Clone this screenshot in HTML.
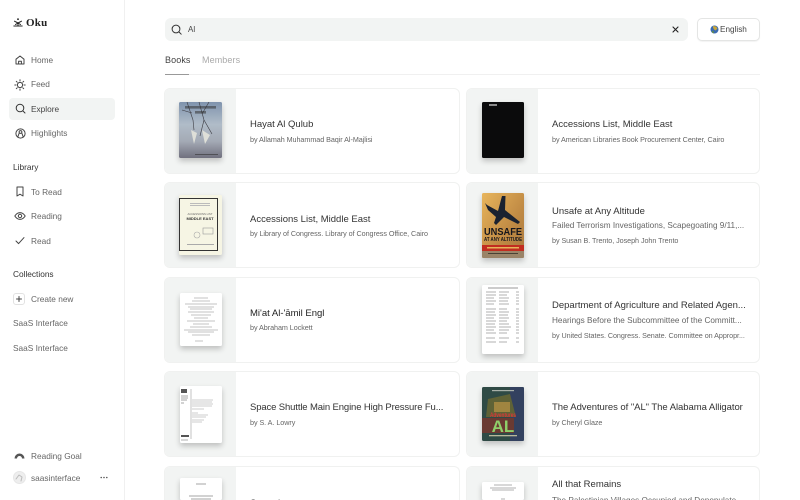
<!DOCTYPE html>
<html><head><meta charset="utf-8">
<style>
*{box-sizing:border-box;margin:0;padding:0}
html,body{width:800px;height:500px;overflow:hidden;background:#fff;font-family:"Liberation Sans",sans-serif;color:#333}
body{position:relative}
.a{position:absolute}
.t{position:absolute;white-space:nowrap;line-height:14px}
.nav{font-size:8.3px;color:#666}
.hd{font-size:8.3px;color:#333}
.card{position:absolute;height:86px;border:1px solid #f0f1f0;border-radius:6px;background:#fff;overflow:hidden}
.card .side{position:absolute;left:0;top:0;width:71px;height:100%;background:#f2f4f3}
.cov{position:absolute;width:43px;height:56px;border-radius:1.5px;box-shadow:0 3px 6px rgba(0,0,0,.22);overflow:hidden;background:#fff}
.cov svg{display:block}
.ti{position:absolute;left:85px;font-size:9.5px;color:#333;white-space:nowrap;line-height:14px}
.su{position:absolute;left:85px;font-size:8.2px;color:#666;white-space:nowrap;line-height:14px}
.by{position:absolute;left:85px;font-size:7.2px;color:#666;white-space:nowrap;letter-spacing:-.05px;line-height:12px}
svg.i{position:absolute;fill:none;stroke:#444;stroke-width:1;stroke-linecap:round;stroke-linejoin:round}
</style></head><body>

<div class="a" style="left:124px;top:0;width:1px;height:500px;background:#f0f0f0"></div>

<!-- logo -->
<svg class="i" style="left:13px;top:18px;stroke:#222" width="10" height="9" viewBox="0 0 10 9"><circle cx="5" cy="1.200" r=".9" fill="#222" stroke="none"/><path d="M1.500 3.200 5 5 8.500 3.200M.8 8h8.400M5 5v3M2.500 6.500 5 5l2.500 1.500"/></svg>
<div class="t" style="left:26px;top:16px;font-family:'Liberation Serif',serif;font-weight:bold;font-size:11px;color:#222;letter-spacing:.2px">Oku</div>

<!-- nav -->
<div class="a" style="left:9px;top:98px;width:106px;height:22px;background:#f2f4f3;border-radius:4px"></div>
<svg class="i" style="left:15px;top:55px" width="10" height="10" viewBox="0 0 10 10"><path d="M1 4.200 5 1l4 3.200V9H1zM3.600 9V6.200h2.800V9"/></svg>
<div class="t nav" style="left:31px;top:53px">Home</div>
<svg class="i" style="left:14px;top:79px" width="12" height="12" viewBox="0 0 12 12"><circle cx="6" cy="6" r="2.600"/><path d="M6 .8v1.200M6 10v1.200M.8 6H2M10 6h1.200M2.300 2.300l.9.9M8.800 8.800l.9.9M2.300 9.700l.9-.9M8.800 3.200l.9-.9"/></svg>
<div class="t nav" style="left:31px;top:77px">Feed</div>
<svg class="i" style="left:15px;top:103px;stroke:#333" width="11" height="11" viewBox="0 0 11 11"><circle cx="5" cy="5" r="3.800"/><path d="M7.800 7.800 10 10"/></svg>
<div class="t nav" style="left:31px;top:102px;color:#444">Explore</div>
<svg class="i" style="left:15px;top:128px" width="11" height="11" viewBox="0 0 11 11"><circle cx="5.500" cy="5.500" r="4.600"/><circle cx="5.500" cy="4" r="1.400"/><path d="M2.800 9 4 5.500M8.200 9 7 5.500"/></svg>
<div class="t nav" style="left:31px;top:126px">Highlights</div>

<div class="t hd" style="left:13px;top:160px">Library</div>
<svg class="i" style="left:15px;top:186px" width="10" height="11" viewBox="0 0 10 11"><path d="M2 1h6v9L5 8.200 2 10z"/></svg>
<div class="t nav" style="left:31px;top:185px">To Read</div>
<svg class="i" style="left:14px;top:211px" width="12" height="10" viewBox="0 0 12 10"><path d="M.8 5C2.400 2.600 4 1.600 6 1.600S9.600 2.600 11.200 5C9.600 7.400 8 8.400 6 8.400S2.400 7.400.8 5z"/><circle cx="6" cy="5" r="1.700"/></svg>
<div class="t nav" style="left:31px;top:209px">Reading</div>
<svg class="i" style="left:15px;top:236px" width="10" height="9" viewBox="0 0 10 9"><path d="M1 5l2.600 2.600L9 1.600"/></svg>
<div class="t nav" style="left:31px;top:234px">Read</div>

<div class="t hd" style="left:13px;top:267px">Collections</div>
<div class="a" style="left:13px;top:293px;width:12px;height:12px;border:1px solid #e2e2e2;border-radius:3px"></div>
<svg class="i" style="left:16px;top:296px" width="6" height="6" viewBox="0 0 6 6"><path d="M3 .5v5M.5 3h5"/></svg>
<div class="t nav" style="left:31px;top:292px">Create new</div>
<div class="t nav" style="left:13px;top:316px">SaaS Interface</div>
<div class="t nav" style="left:13px;top:341px">SaaS Interface</div>

<svg class="a" style="left:14px;top:451px" width="11" height="8" viewBox="0 0 11 8"><path d="M.5 7.500a5 5 0 0 1 10 0H8a2.500 2.500 0 0 0-5 0z" fill="#555"/></svg>
<div class="t nav" style="left:31px;top:449px">Reading Goal</div>
<div class="a" style="left:13px;top:471px;width:13px;height:13px;border-radius:50%;background:#eee;border:1px solid #e6e6e6"></div>
<svg class="i" style="left:15px;top:473px;stroke:#bbb" width="9" height="9" viewBox="0 0 9 9"><path d="M1 6l3-4 3 2-1 4"/></svg>
<div class="t nav" style="left:31px;top:471px">saasinterface</div>
<svg class="a" style="left:100px;top:476px" width="8" height="3" viewBox="0 0 8 3"><circle cx="1.200" cy="1.500" r=".8" fill="#555"/><circle cx="4" cy="1.500" r=".8" fill="#555"/><circle cx="6.800" cy="1.500" r=".8" fill="#555"/></svg>

<!-- search -->
<div class="a" style="left:165px;top:18px;width:523px;height:23px;background:#f2f4f3;border-radius:6px"></div>
<svg class="i" style="left:171px;top:24px;stroke:#333" width="11" height="11" viewBox="0 0 11 11"><circle cx="5" cy="5" r="3.900"/><path d="M7.900 7.900 10.200 10.200"/></svg>
<div class="t" style="left:188px;top:23px;font-size:8px;color:#444">Al</div>
<svg class="i" style="left:672px;top:26px;stroke:#222;stroke-width:1.100" width="7" height="7" viewBox="0 0 7 7"><path d="M1 1l5 5M6 1 1 6"/></svg>
<div class="a" style="left:697px;top:18px;width:63px;height:23px;background:#fff;border:1px solid #e4e5e4;border-radius:5px;box-shadow:0 1px 1px rgba(0,0,0,.05)"></div>
<svg class="a" style="left:710px;top:25px" width="9" height="9" viewBox="0 0 9 9"><circle cx="4.500" cy="4.500" r="4" fill="#3a6ab0"/><path d="M3 1l3 .5 1.500 2-2 2-1.500-1-1-2z" fill="#c9a63a"/><path d="M2 5.500l2 1-.5 2-1.500-1z" fill="#5c8a50"/></svg>
<div class="t" style="left:720px;top:23px;font-size:8.200px;color:#444">English</div>

<!-- tabs -->
<div class="t" style="left:165px;top:53px;font-size:9px;color:#444;letter-spacing:.1px">Books</div>
<div class="t" style="left:202px;top:53px;font-size:9px;color:#aaa;letter-spacing:.1px">Members</div>
<div class="a" style="left:165px;top:74px;width:595px;height:1px;background:#f0f0f0"></div>
<div class="a" style="left:165px;top:74px;width:24px;height:1px;background:#999"></div>

<!-- row 1 -->
<div class="card" style="left:164px;top:88px;width:296px">
<div class="side"></div>
<div class="cov" style="left:14px;top:13px"><svg width="43" height="56" viewBox="0 0 43 56"><defs><linearGradient id="g1" x1="0" y1="0" x2="0" y2="1"><stop offset="0" stop-color="#7f93ad"/><stop offset=".4" stop-color="#b0bcc8"/><stop offset=".7" stop-color="#a4aab5"/><stop offset="1" stop-color="#70707e"/></linearGradient></defs><rect width="43" height="56" fill="url(#g1)"/><path d="M8 0 14 18M20 0l5 18M30 0 23 12M25 18l-4 16M25 18l8 14M3 8l10 3M14 18l1 10" stroke="#3a3a40" stroke-width=".6" fill="none"/><path d="M12 28l3 14 3-11zM23 28l3 14 5-9z" fill="#dedfd8"/><rect x="6" y="4" width="31" height="2.600" fill="#333" opacity=".55"/><rect x="16" y="9" width="11" height="2.600" fill="#333" opacity=".55"/><rect x="16" y="52" width="23" height="1" fill="#333" opacity=".6"/></svg></div>
<div class="ti" style="top:29px">Hayat Al Qulub</div>
<div class="by" style="top:45px">by Allamah Muhammad Baqir Al-Majlisi</div>
</div>

<div class="card" style="left:466px;top:88px;width:294px">
<div class="side"></div>
<div class="cov" style="left:15px;top:13px;width:42px;background:#0b0b0c"><svg width="42" height="56" viewBox="0 0 42 56"><rect x="7" y="2" width="8" height="2" fill="#8a8a8a"/></svg></div>
<div class="ti" style="top:29px">Accessions List, Middle East</div>
<div class="by" style="top:45px">by American Libraries Book Procurement Center, Cairo</div>
</div>

<!-- row 2 -->
<div class="card" style="left:164px;top:182px;width:296px">
<div class="side"></div>
<div class="cov" style="left:14px;top:12px;height:60px;background:#f6f5e4"><svg width="43" height="60" viewBox="0 0 43 60"><rect x=".5" y="3.500" width="38" height="52" fill="none" stroke="#333" stroke-width="1"/><rect x="11" y="8" width="20" height="1" fill="#bbb"/><rect x="11" y="10" width="20" height="1" fill="#bbb"/><text x="21" y="20" text-anchor="middle" font-family="Liberation Sans,sans-serif" font-size="2.800" fill="#666">ACCESSIONS LIST</text><text x="21" y="25" text-anchor="middle" font-family="Liberation Sans,sans-serif" font-weight="bold" font-size="4" fill="#333">MIDDLE EAST</text><rect x="24" y="33" width="10" height="6" fill="none" stroke="#999" stroke-width=".6"/><circle cx="18" cy="40" r="3" fill="none" stroke="#aaa" stroke-width=".6"/><rect x="8" y="49" width="27" height="1" fill="#aaa"/></svg></div>
<div class="ti" style="top:30px">Accessions List, Middle East</div>
<div class="by" style="top:45px">by Library of Congress. Library of Congress Office, Cairo</div>
</div>

<div class="card" style="left:466px;top:182px;width:294px">
<div class="side"></div>
<div class="cov" style="left:15px;top:10px;width:42px;height:65px"><svg width="42" height="65" viewBox="0 0 42 65"><defs><linearGradient id="g2" x1="0" y1="0" x2="1" y2="1"><stop offset="0" stop-color="#e8b55c"/><stop offset=".6" stop-color="#c08a44"/><stop offset="1" stop-color="#a8783e"/></linearGradient></defs><rect width="42" height="65" fill="url(#g2)"/><path d="M20 3h3.500L23 17l15 12-2 2-14-7-8 8-2-2 2-6-8-7-3-7 2 2 11 6z" fill="#1b2230"/><text x="2" y="42" font-family="Liberation Sans,sans-serif" font-weight="bold" font-size="10.500" textLength="38" lengthAdjust="spacingAndGlyphs" fill="#15151c">UNSAFE</text><text x="2" y="48" font-family="Liberation Sans,sans-serif" font-weight="bold" font-size="5" textLength="38" lengthAdjust="spacingAndGlyphs" fill="#15151c">AT ANY ALTITUDE</text><rect y="52" width="42" height="6" fill="#c22d20"/><rect x="5" y="54" width="32" height="1.500" fill="#e7b45a"/><rect y="58" width="42" height="7" fill="#9a8468"/><rect x="6" y="60" width="30" height="1" fill="#4a4034"/></svg></div>
<div class="ti" style="top:22px">Unsafe at Any Altitude</div>
<div class="su" style="top:36px">Failed Terrorism Investigations, Scapegoating 9/11,...</div>
<div class="by" style="top:52px">by Susan B. Trento, Joseph John Trento</div>
</div>

<!-- row 3 -->
<div class="card" style="left:164px;top:277px;width:296px">
<div class="side"></div>
<div class="cov" style="left:15px;top:15px;width:42px;height:53px"><svg width="42" height="53" viewBox="0 0 42 53"><path d="M14 5h14M12 8h18M5 11h32M8 14h26M10 16h22M8 19h26M11 22h20M14 25h14M7 28h28M13 31h16M10 34h22M4 37h34M8 39h26M12 42h18M15 48h8" stroke="#888" stroke-width=".6"/></svg></div>
<div class="ti" style="top:29px;color:#222">Mi'at Al-'āmil Engl</div>
<div class="by" style="top:44px">by Abraham Lockett</div>
</div>

<div class="card" style="left:466px;top:277px;width:294px">
<div class="side"></div>
<div class="cov" style="left:15px;top:7px;width:42px;height:69px"><svg width="42" height="69" viewBox="0 0 42 69"><path d="M6 3h30" stroke="#777" stroke-width=".7"/><path d="M4 7h10M17 7h10M34 7h3M4 10h10M17 10h8M34 10h3M4 13h8M17 13h10M34 13h3M4 16h10M17 16h9M34 16h3M4 19h8M17 19h10M34 19h3M4 24h10M17 24h8M34 24h3M4 27h9M17 27h10M34 27h3M4 30h10M17 30h9M34 30h3M4 33h8M17 33h10M34 33h3M4 36h10M17 36h8M34 36h3M4 39h9M17 39h10M34 39h3M4 42h10M17 42h12M34 42h3M4 45h8M17 45h10M34 45h3M4 48h10M17 48h8M34 48h3M4 53h9M17 53h10M34 53h3M4 57h10M17 57h8M34 57h3" stroke="#999" stroke-width=".7"/></svg></div>
<div class="ti" style="top:21px">Department of Agriculture and Related Agen...</div>
<div class="su" style="top:36px">Hearings Before the Subcommittee of the Committ...</div>
<div class="by" style="top:52px">by United States. Congress. Senate. Committee on Appropr...</div>
</div>

<!-- row 4 -->
<div class="card" style="left:164px;top:371px;width:296px">
<div class="side"></div>
<div class="cov" style="left:15px;top:14px;width:42px;height:57px"><svg width="42" height="57" viewBox="0 0 42 57"><path d="M11 3v50" stroke="#aaa" stroke-width=".7"/><rect x="1" y="3" width="6" height="4" fill="#555"/><path d="M1 10h7M1 12h7M1 14h6M1 17h3" stroke="#888" stroke-width=".7"/><path d="M12 14h21M12 16h20M12 18h21M12 20h20M12 23h12M12 27h6M12 29h16M12 31h14M12 34h12M12 36h10" stroke="#999" stroke-width=".6"/><rect x="1" y="49" width="8" height="2" fill="#555"/><path d="M1 54h7" stroke="#999" stroke-width=".7"/></svg></div>
<div class="ti" style="top:29px;letter-spacing:-.13px">Space Shuttle Main Engine High Pressure Fu...</div>
<div class="by" style="top:45px">by S. A. Lowry</div>
</div>

<div class="card" style="left:466px;top:371px;width:294px">
<div class="side"></div>
<div class="cov" style="left:15px;top:15px;width:42px;height:54px"><svg width="42" height="54" viewBox="0 0 42 54"><rect width="42" height="54" fill="#2f4a45"/><rect x="28" y="0" width="14" height="54" fill="#33415f"/><path d="M6 12 28 7 34 30H4z" fill="#5f6236"/><path d="M12 15h16v10H12z" fill="#a08540"/><rect x="10" y="3" width="22" height="1.200" fill="#a8b0a8"/><rect y="31" width="32" height="15" fill="#6a3a32"/><text x="21" y="30" text-anchor="middle" font-family="Liberation Sans,sans-serif" font-weight="bold" font-size="6" textLength="26" lengthAdjust="spacingAndGlyphs" fill="#d9353a">Adventures</text><text x="21" y="45" text-anchor="middle" font-family="Liberation Sans,sans-serif" font-weight="bold" font-size="17" fill="#8fd06a">AL</text><rect x="7" y="48" width="28" height="1.300" fill="#b9b89a"/></svg></div>
<div class="ti" style="top:29px;letter-spacing:-.05px">The Adventures of "AL" The Alabama Alligator</div>
<div class="by" style="top:45px">by Cheryl Glaze</div>
</div>

<!-- row 5: trimmed to the frame bottom -->
<div class="card" style="left:164px;top:466px;width:296px;height:34px;border-bottom:0;border-radius:6px 6px 0 0">
<div class="side"></div>
<div class="cov" style="left:15px;top:11px;width:42px;height:22px"><svg width="42" height="22" viewBox="0 0 42 22"><path d="M16 6h10M9 18h24M11 21h20" stroke="#888" stroke-width=".7"/></svg></div>
<div class="ti" style="top:30px;height:3px;overflow:hidden">Sacred...</div>
</div>

<div class="card" style="left:466px;top:466px;width:294px;height:34px;border-bottom:0;border-radius:6px 6px 0 0">
<div class="side"></div>
<div class="cov" style="left:15px;top:15px;width:42px;height:18px"><svg width="42" height="18" viewBox="0 0 42 18"><path d="M12 3h18M8 6h26M10 8h22M19 17h4" stroke="#999" stroke-width=".7"/></svg></div>
<div class="ti" style="top:11px">All that Remains</div>
<div class="su" style="top:27px;height:6px;overflow:hidden">The Palestinian Villages Occupied and Depopulate...</div>
</div>

</body></html>
